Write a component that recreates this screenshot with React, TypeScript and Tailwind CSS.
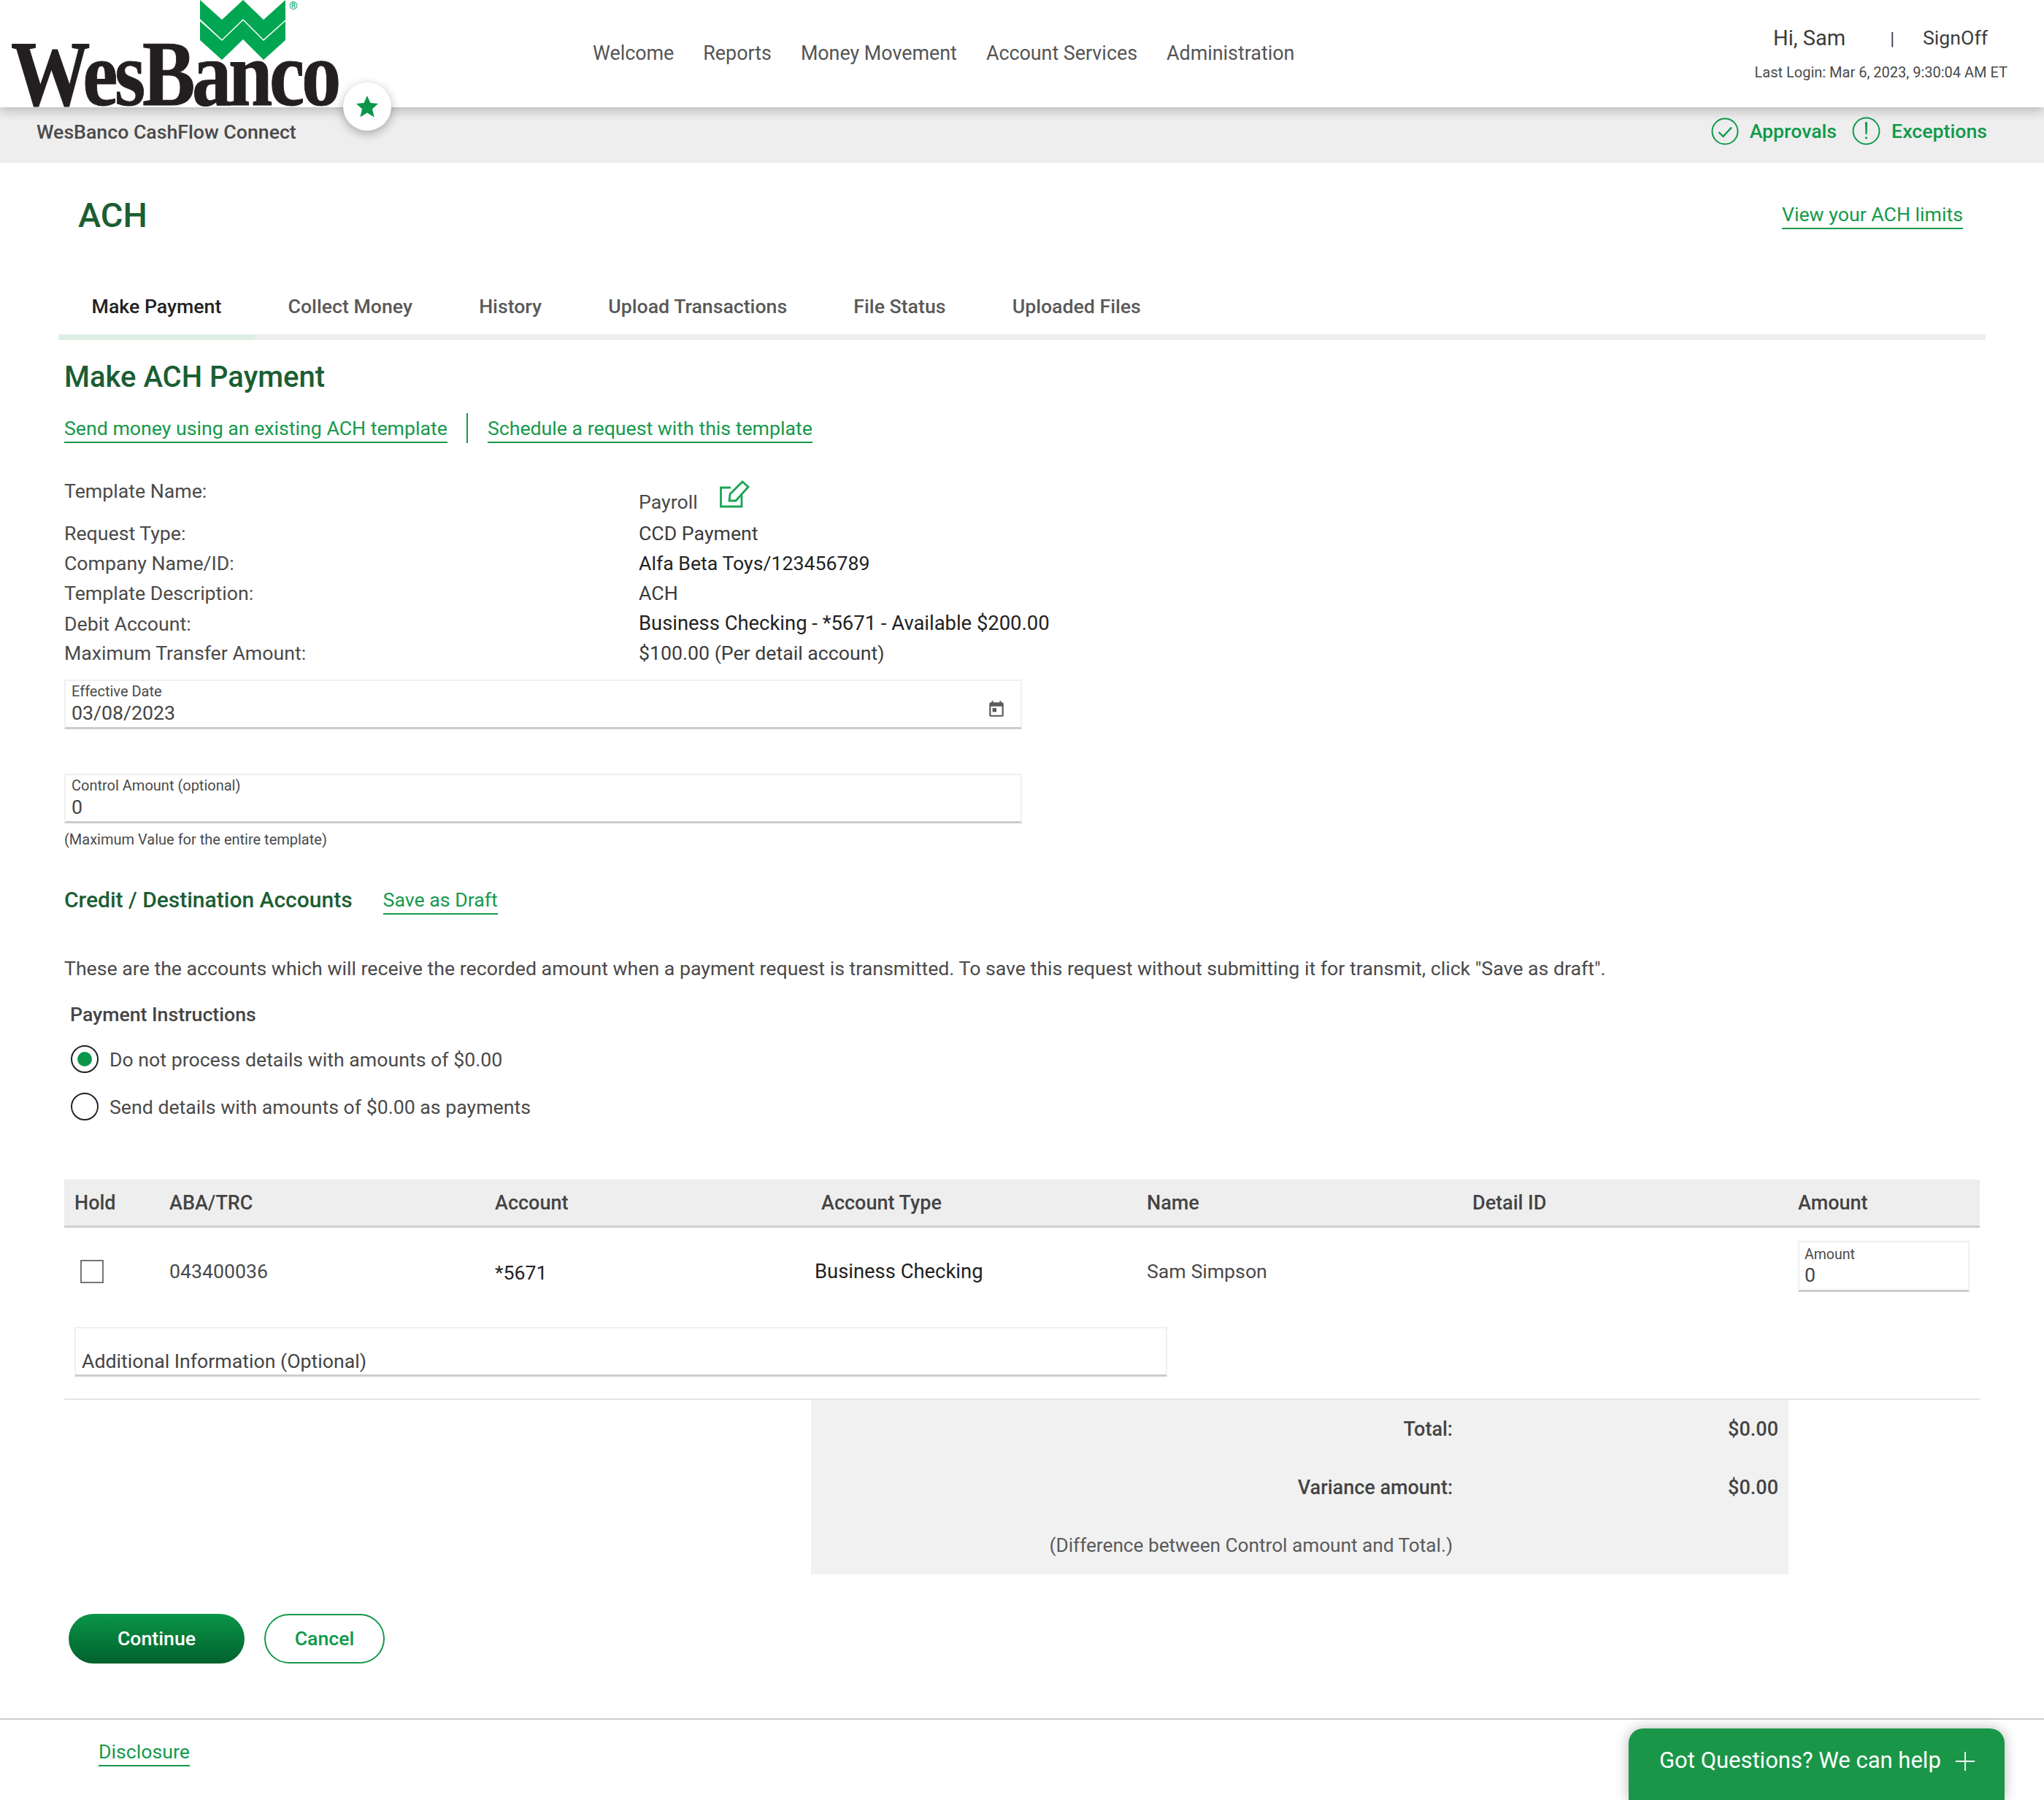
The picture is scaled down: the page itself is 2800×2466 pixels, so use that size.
import React from "react";

function Chevrons() {
  return (
    <svg viewBox="0 0 117 82" className="w-[117px] h-[82px]" aria-hidden="true">
      <polygon fill="#00a651" points="0,0 30,27 59,0 87,27 117,0 117,27 87,54 59,26 30,54 0,26" />
      <polygon fill="#00a651" points="0,29 30,56 59,28 87,56 117,29 117,55 87,82 59,54 30,82 0,55" />
    </svg>
  );
}

function Star() {
  return (
    <svg viewBox="0 0 32 32" className="w-[32px] h-[32px]" aria-hidden="true">
      <polygon fill="#0a9648" points="16,1 20.4,11 31,12 23,19.2 25.6,30.5 16,24.5 6.4,30.5 9,19.2 1,12 11.6,11" />
    </svg>
  );
}

function CheckCircle() {
  return (
    <svg viewBox="0 0 38 38" className="w-[38px] h-[38px]" fill="none" stroke="#0f9a4a" aria-hidden="true">
      <circle cx="19" cy="19" r="17.5" strokeWidth="2" />
      <path d="M10.5 20 L16.5 26 L28 13.5" strokeWidth="2.4" />
    </svg>
  );
}

function AlertCircle() {
  return (
    <svg viewBox="0 0 40 40" className="w-[39px] h-[39px]" fill="none" stroke="#0f9a4a" aria-hidden="true">
      <circle cx="20" cy="20" r="18.4" strokeWidth="2" />
      <path d="M19 8 H21 L20.5 24 H19.5 Z" strokeWidth="1.2" fill="#0f9a4a" />
      <circle cx="20" cy="29.5" r="1.6" fill="#0f9a4a" stroke="none" />
    </svg>
  );
}

function EditIcon() {
  return (
    <svg viewBox="0 0 41 38" className="w-[41px] h-[38px]" fill="none" stroke="#1aa655" strokeWidth="2.8" aria-hidden="true">
      <path d="M15 10 H1.5 V36 H30 V20" />
      <path d="M13 28 L14 19 L31 2 L39 9 L22 28 Z" />
    </svg>
  );
}

function CalendarIcon() {
  return (
    <svg viewBox="0 0 24 24" className="w-[26px] h-[26px]" fill="#5a5a5a" aria-hidden="true">
      <path d="M19 4h-1V2h-2v2H8V2H6v2H5a2 2 0 0 0-2 2v14a2 2 0 0 0 2 2h14a2 2 0 0 0 2-2V6a2 2 0 0 0-2-2zm0 16H5V9h14v11z" />
      <rect x="7" y="11" width="5" height="5" />
    </svg>
  );
}

function TextLink({ children }: { children: React.ReactNode }) {
  return (
    <a className="inline-block text-[26.7px] leading-[36px] text-[#16994b] border-b-2 border-[#16994b]">{children}</a>
  );
}

function Field({ label, value, icon }: { label: string; value: string; icon?: boolean }) {
  return (
    <div className="w-[1312px] h-[68px] border-2 border-[#f0f0f0] border-b-[3px] border-b-[#cccccc] pl-[8px] pr-[20px] flex items-center justify-between">
      <div className="pb-[2px]">
        <div className="text-[20px] leading-[26px] text-[#4a4a4a]">{label}</div>
        <div className="text-[26.7px] leading-[34px] text-[#444444]">{value}</div>
      </div>
      {icon ? <div className="mt-[12px]"><CalendarIcon /></div> : null}
    </div>
  );
}

const details: [string, string][] = [
  ["Request Type:", "CCD Payment"],
  ["Company Name/ID:", "Alfa Beta Toys/123456789"],
  ["Template Description:", "ACH"],
  ["Debit Account:", "Business Checking - *5671 - Available $200.00"],
  ["Maximum Transfer Amount:", "$100.00 (Per detail account)"],
];

const tabs = ["Make Payment", "Collect Money", "History", "Upload Transactions", "File Status", "Uploaded Files"];
const nav = ["Welcome", "Reports", "Money Movement", "Account Services", "Administration"];
const cols = ["Hold", "ABA/TRC", "Account", "Account Type", "Name", "Detail ID", "Amount"];

export default function App() {
  return (
    <div className="relative w-[2800px] h-[2466px] overflow-hidden bg-white font-['Roboto',sans-serif] text-[26.7px] text-[#4a4a4a]">
      {/* Header */}
      <header className="relative z-10 h-[147px] bg-white flex items-center shadow-[0_5px_14px_rgba(0,0,0,0.22)]">
        <div className="relative w-[812px] h-full shrink-0">
          <div className="absolute left-[274px] top-0"><Chevrons /></div>
          <span className="absolute left-[396px] top-[-3px] text-[15px] text-[#00a651]">®</span>
          <span className="absolute left-[15px] top-[52px] origin-left scale-x-[0.855] font-['Liberation_Serif',serif] font-bold text-[127px] leading-[99px] tracking-[-0.04em] text-[#231f20] whitespace-nowrap [-webkit-text-stroke:1px_#231f20]">WesBanco</span>
          <div className="absolute left-[470px] top-[113px] w-[66px] h-[66px] rounded-full bg-white flex items-center justify-center shadow-[0_4px_14px_rgba(0,0,0,0.3)]">
            <Star />
          </div>
        </div>
        <nav className="flex gap-[40px] text-[26.85px] text-[#555555]">
          {nav.map((n) => (
            <span key={n}>{n}</span>
          ))}
        </nav>
        <div className="ml-auto pr-[50px] flex flex-col items-end">
          <div className="flex items-center mr-[27px] h-[36px] text-[#3c3c3c]">
            <span className="text-[29px]">Hi, Sam</span>
            <span className="ml-[61px] text-[24px]">|</span>
            <span className="ml-[39px] text-[26.7px]">SignOff</span>
          </div>
          <div className="mt-[14px] text-[20px] leading-[28px] text-[#4a4a4a]">Last Login: Mar 6, 2023, 9:30:04 AM ET</div>
        </div>
      </header>

      {/* Sub bar */}
      <div className="h-[76px] bg-[#eeeeee] flex items-center justify-between pl-[50px] pr-[78px] pb-[8px]">
        <span className="font-medium text-[#4a4a4a]">WesBanco CashFlow Connect</span>
        <div className="-mt-[2px] flex items-center font-medium text-[#0f9a4a]">
          <CheckCircle />
          <span className="ml-[15px]">Approvals</span>
          <div className="ml-[21px]"><AlertCircle /></div>
          <span className="ml-[15px]">Exceptions</span>
        </div>
      </div>

      {/* Main */}
      <main className="px-[88px]">
        <div className="h-[144px] flex items-center justify-between pl-[19px] pr-[23px]">
          <h1 className="text-[47px] font-medium text-[#1b5e33]">ACH</h1>
          <TextLink>View your ACH limits</TextLink>
        </div>

        <div className="-mx-[8px] h-[99px] pt-[7px] flex items-stretch border-b-[8px] border-[#eeeeee]">
          {tabs.map((t, i) => (
            <div
              key={t}
              className={
                i === 0
                  ? "px-[45.6px] pt-[9px] flex items-center -mb-[8px] border-b-[8px] border-[#e0efe6] font-medium text-[#222222]"
                  : "px-[45.6px] pt-[9px] pb-0 flex items-center -mb-[8px] border-b-[8px] border-transparent font-medium text-[#595959]"
              }
            >
              {t}
            </div>
          ))}
        </div>

        <div className="h-[100px] pt-[2px] flex items-center">
          <h2 className="text-[40px] font-medium text-[#1b5e33]">Make ACH Payment</h2>
        </div>

        <div className="h-[42px] flex items-start">
          <div className="mt-[1px]"><TextLink>Send money using an existing ACH template</TextLink></div>
          <div className="mx-[26.5px] w-[2px] h-[41px] bg-[#16994b]" />
          <div className="mt-[1px]"><TextLink>Schedule a request with this template</TextLink></div>
        </div>

        <div className="mt-[44px]">
          <div className="h-[59px] grid grid-cols-[787px_1fr]">
            <div className="leading-[42px]">Template Name:</div>
            <div className="flex items-start">
              <span className="mt-[16px] leading-[40px]">Payroll</span>
              <div className="ml-[30px] mt-[6px]"><EditIcon /></div>
            </div>
          </div>
          {details.map(([k, v], i) => (
            <div key={k} className="h-[41px] grid grid-cols-[787px_1fr] items-center">
              <div>{k}</div>
              <div className={i === 1 ? "text-[#222222]" : i === 3 ? "text-[27.4px] text-[#222222]" : "text-[#3c3c3c]"}>{v}</div>
            </div>
          ))}
        </div>

        <div className="mt-[15px]"><Field label="Effective Date" value="03/08/2023" icon /></div>
        <div className="mt-[61px]"><Field label="Control Amount (optional)" value="0" /></div>
        <div className="h-[43px] flex items-center text-[20px]">(Maximum Value for the entire template)</div>

        <div className="h-[122px] flex items-center gap-[42px]">
          <h3 className="text-[30px] font-medium text-[#1b5e33]">Credit / Destination Accounts</h3>
          <div className="mt-[3px]"><TextLink>Save as Draft</TextLink></div>
        </div>

        <div className="h-[68px] flex items-center">
          These are the accounts which will receive the recorded amount when a payment request is transmitted. To save this request without submitting it for transmit, click "Save as draft".
        </div>

        <div className="h-[58px] pl-[8px] flex items-center text-[26.7px] font-medium text-[#444444]">Payment Instructions</div>

        <div className="h-[64px] pl-[9px] flex items-center gap-[15px]">
          <span className="w-[38px] h-[38px] rounded-full border-2 border-[#222222] flex items-center justify-center">
            <span className="w-[20px] h-[20px] rounded-full bg-[#0a9648]" />
          </span>
          <span className="mt-[2px]">Do not process details with amounts of $0.00</span>
        </div>
        <div className="h-[66px] pl-[9px] flex items-center gap-[15px]">
          <span className="w-[38px] h-[38px] rounded-full border-2 border-[#222222]" />
          <span className="mt-[2px]">Send details with amounts of $0.00 as payments</span>
        </div>

        {/* Table */}
        <div className="mt-[67px] h-[66px] pt-[2px] bg-[#eeeeee] border-b-[3px] border-[#cfcfcf] grid grid-cols-[144px_446px_447px_446px_446px_446px_249px] items-center text-[27px] font-medium text-[#444444]">
          {cols.map((c, i) => (
            <div key={c} className={i === 0 ? "pl-[14px]" : ""}>{c}</div>
          ))}
        </div>
        <div className="h-[118px] pt-[3px] grid grid-cols-[144px_446px_447px_446px_446px_446px_249px] items-center">
          <div className="pl-[22px]">
            <div className="-mt-[2px] w-[32px] h-[32px] border-2 border-[#777777]" />
          </div>
          <div>043400036</div>
          <div className="mt-[3px] text-[#222222]">*5671</div>
          <div className="-ml-[9px] text-[27.4px] text-[#222222]">Business Checking</div>
          <div>Sam Simpson</div>
          <div />
          <div className="-mt-[16px] w-[235px] h-[70px] border-2 border-[#f0f0f0] border-b-[3px] border-b-[#cccccc] pl-[7px] flex flex-col justify-center">
            <div className="text-[19.5px] leading-[26px] text-[#4a4a4a]">Amount</div>
            <div className="text-[26.7px] leading-[30px] text-[#444444]">0</div>
          </div>
        </div>
        <div className="mt-[18px] ml-[14px] w-[1497px] h-[68px] border-2 border-[#f0f0f0] border-b-[3px] border-b-[#cccccc] pl-[8px] pb-[2px] flex items-end text-[#444444] leading-[32px]">
          Additional Information (Optional)
        </div>
        <div className="mt-[30px] h-[2px] bg-[#e4e4e4]" />

        {/* Summary */}
        <div className="ml-[1023px] w-[1339px] h-[239px] bg-[#f1f1f1] pr-[14px]">
          <div className="h-[80px] grid grid-cols-[879px_1fr] items-center text-[27px] font-medium text-[#444444]">
            <div className="text-right">Total:</div>
            <div className="text-right">$0.00</div>
          </div>
          <div className="h-[80px] grid grid-cols-[879px_1fr] items-center text-[27px] font-medium text-[#444444]">
            <div className="text-right">Variance amount:</div>
            <div className="text-right">$0.00</div>
          </div>
          <div className="h-[79px] grid grid-cols-[879px_1fr] items-center text-[26.2px] text-[#5a5a5a]">
            <div className="text-right">(Difference between Control amount and Total.)</div>
          </div>
        </div>

        {/* Buttons */}
        <div className="mt-[54px] ml-[6px] flex gap-[27px]">
          <button className="w-[241px] h-[68px] rounded-full bg-linear-to-b from-[#0a9648] to-[#02612d] text-white text-[26.7px] font-medium">Continue</button>
          <button className="w-[165px] h-[68px] rounded-full border-2 border-[#16994b] bg-white text-[#0f9a4a] text-[26.7px] font-medium">Cancel</button>
        </div>
      </main>

      {/* Footer */}
      <footer className="mt-[75px] border-t-2 border-[#cccccc] pl-[135px] pt-[24px]">
        <TextLink>Disclosure</TextLink>
      </footer>

      {/* Chat */}
      <div className="absolute left-[2231px] top-[2368px] w-[515px] h-[98px] rounded-t-[20px] bg-[#1a9648] text-white text-[31px] pl-[42px] pt-[21px] flex items-start shadow-[0_0_18px_rgba(0,0,0,0.28)]">
        <span>Got Questions? We can help</span>
        <svg viewBox="0 0 26 26" className="ml-[20px] mt-[11px] w-[26px] h-[26px]" fill="none" stroke="white" strokeWidth="1.8" aria-hidden="true">
          <path d="M13 0 V26 M0 13 H26" />
        </svg>
      </div>
    </div>
  );
}
